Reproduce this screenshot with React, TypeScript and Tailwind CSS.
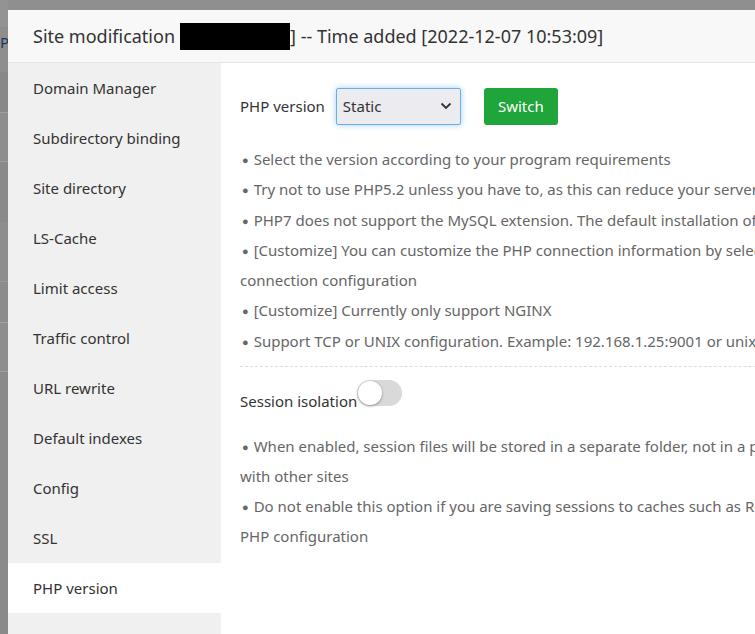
import { useState } from "react";

const menu = [
  "Domain Manager",
  "Subdirectory binding",
  "Site directory",
  "LS-Cache",
  "Limit access",
  "Traffic control",
  "URL rewrite",
  "Default indexes",
  "Config",
  "SSL",
  "PHP version",
  "Composer",
];

const Bullet = ({ children, dot = true }: { children: React.ReactNode; dot?: boolean }) => (
  <div className="whitespace-nowrap h-[30.3px] leading-[30.3px]">
    {dot && <span className="inline-block leading-none text-[11px] ml-[2px] mr-[5px] align-[1px]">●</span>}
    {children}
  </div>
);

export default function App() {
  const [active, setActive] = useState("PHP version");
  const [isolation, setIsolation] = useState(false);

  return (
    <div
      className="w-[755px] h-[634px] overflow-hidden bg-[#8f8f8f] flex"
      style={{ fontFamily: '"Noto Sans", "Open Sans", sans-serif' }}
    >
      {/* page behind the overlay */}
      <div className="w-[8px] shrink-0 flex flex-col overflow-hidden text-[15px] text-[#1c3a5c]">
        <div className="h-[27px] shrink-0 bg-[#939393]" />
        <div className="h-[45px] shrink-0 bg-[#8e8e8e] leading-[30px]">P</div>
        <div className="h-[40px] shrink-0 bg-[#888888]" />
        <div className="h-[50px] shrink-0 bg-[#8e8e8e] border-y border-[#a0a0a0]" />
        <div className="h-[60px] shrink-0 bg-[#8a8a8a]" />
        <div className="h-[60px] shrink-0 bg-[#8e8e8e] border-b border-[#9a9a9a]" />
        <div className="h-[40px] shrink-0 bg-[#8c8c8c]" />
        <div className="h-[50px] shrink-0 bg-[#8e8e8e] border-y border-[#a0a0a0]" />
        <div className="flex-1 bg-[#8a8a8a]" />
      </div>

      <div className="mt-[10px] w-[900px] shrink-0 bg-white flex flex-col">
        <div className="h-[53px] shrink-0 bg-[#f8f8f8] border-b border-[#e6e6e6] flex items-center pl-[25px] text-[18px] text-[#333]">
          <span>Site modification</span>
          <span className="ml-[5px] inline-block w-[110px] h-[27px] bg-black" />
          <span>] -- Time added [2022-12-07 10:53:09]</span>
        </div>

        <div className="flex flex-1 shrink-0">
          <ul className="w-[213px] shrink-0 bg-[#f0f0f0]">
            {menu.map((m) => (
              <li
                key={m}
                onClick={() => setActive(m)}
                className={
                  "h-[50px] flex items-center pl-[25px] text-[15px] text-[#333] cursor-pointer " +
                  (active === m ? "bg-white" : "")
                }
              >
                {m}
              </li>
            ))}
          </ul>

          <div className="flex-1 pl-[19px] pt-[25px] text-[15px]">
            <div className="flex items-center h-[37px]">
              <span className="text-[#333] mr-[11px]">PHP version</span>
              <div className="relative">
                <select className="appearance-none w-[125px] h-[37px] pl-[6px] bg-[#ebebf0] border border-[#66afe9] rounded-[2px] shadow-[0_0_6px_rgba(102,175,233,0.6)] text-[15px] text-[#333] outline-none">
                  <option>Static</option>
                  <option>PHP-74</option>
                  <option>PHP-80</option>
                </select>
                <svg
                  className="absolute right-[9px] top-[14px] pointer-events-none"
                  width="12"
                  height="8"
                  viewBox="0 0 12 8"
                  fill="none"
                  stroke="#333"
                  strokeWidth="1.8"
                >
                  <path d="M1.5 1.5 6 6l4.5-4.5" />
                </svg>
              </div>
              <button className="ml-[23px] h-[37px] w-[74px] bg-[#20a53a] text-white rounded-[3px] text-[15px]">
                Switch
              </button>
            </div>

            <div className="mt-[19px] text-[#666]">
              <Bullet>Select the version according to your program requirements</Bullet>
              <Bullet>Try not to use PHP5.2 unless you have to, as this can reduce your server security;</Bullet>
              <Bullet>PHP7 does not support the MySQL extension. The default installation of MySQLi and mysql-pdo.</Bullet>
              <Bullet>[Customize] You can customize the PHP connection information by selecting custom and filling in the PHP</Bullet>
              <Bullet dot={false}>connection configuration</Bullet>
              <Bullet>[Customize] Currently only support NGINX</Bullet>
              <Bullet>Support TCP or UNIX configuration. Example: 192.168.1.25:9001 or unix:/tmp/php-cgi-74.sock</Bullet>
            </div>

            <div className="mt-[10px] border-t border-dashed border-[#ddd]" />

            <div className="mt-[15px] flex items-center">
              <span className="text-[#333] mt-[8px]">Session isolation</span>
              <button
                onClick={() => setIsolation(!isolation)}
                className={
                  "w-[45px] h-[26px] rounded-full flex items-center p-[1px] -mt-[8px] " +
                  (isolation ? "bg-[#20a53a] justify-end" : "bg-[#d9d9d9] justify-start")
                }
              >
                <span className="w-[24px] h-[24px] rounded-full bg-white shadow-[0_1px_3px_rgba(0,0,0,0.35)]" />
              </button>
            </div>

            <div className="mt-[18px] text-[#666]">
              <Bullet>When enabled, session files will be stored in a separate folder, not in a public storage location</Bullet>
              <Bullet dot={false}>with other sites</Bullet>
              <Bullet>Do not enable this option if you are saving sessions to caches such as Redis in the</Bullet>
              <Bullet dot={false}>PHP configuration</Bullet>
            </div>
          </div>
        </div>
      </div>
    </div>
  );
}
